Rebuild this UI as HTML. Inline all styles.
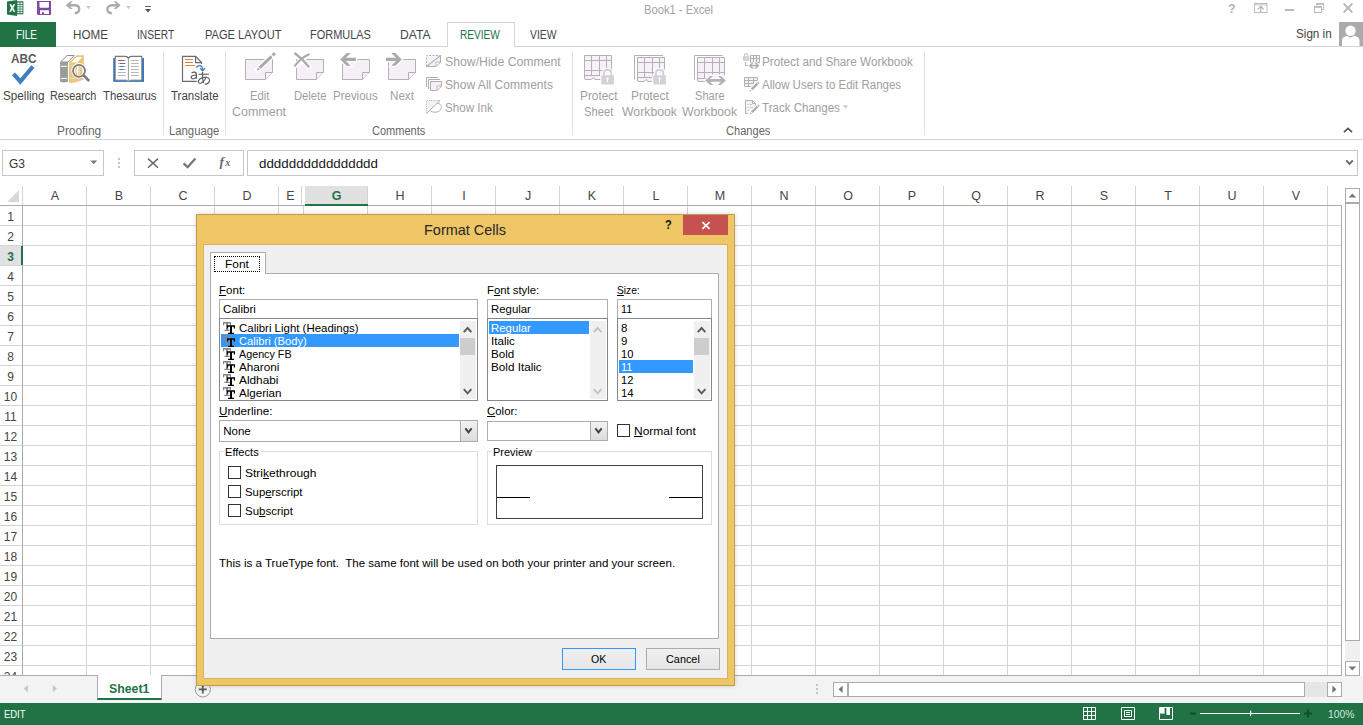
<!DOCTYPE html>
<html><head><meta charset="utf-8"><title>Book1 - Excel</title>
<style>
html,body{margin:0;padding:0;}
body{width:1363px;height:725px;overflow:hidden;background:#fff;position:relative;font-family:"Liberation Sans",sans-serif;}
.a{position:absolute;box-sizing:border-box;}
.t{position:absolute;white-space:pre;line-height:1;transform-origin:0 0;font-family:"Liberation Sans",sans-serif;}
.t u{text-decoration:underline;text-underline-offset:1px;}
svg{position:absolute;overflow:visible;}
.vl{position:absolute;width:1px;background:#d4d4d4;}
.hl{position:absolute;height:1px;background:#d4d4d4;}
.ch{position:absolute;top:186px;height:19px;line-height:21px;text-align:center;font-size:12.5px;color:#444;}
.rh{position:absolute;left:0;width:21px;height:19px;line-height:23px;text-align:center;font-size:12px;color:#444;}
.sep{position:absolute;top:51px;height:84px;width:1px;background:#e1e1e1;}
.inp{position:absolute;box-sizing:border-box;background:#fff;border:1px solid #abadb3;}
.lst{position:absolute;box-sizing:border-box;background:#fff;border:1px solid #828790;}
.cb{position:absolute;box-sizing:border-box;width:13px;height:13px;background:#fff;border:1px solid #333;}
.grp{position:absolute;box-sizing:border-box;border:1px solid #dcdcdc;}
.sel{position:absolute;background:#3399ff;height:13px;}
.trk{position:absolute;background:#f0f0f0;}
.btn{position:absolute;box-sizing:border-box;background:linear-gradient(#f0f0f0,#e5e5e5);border:1px solid #acacac;}
.sb{position:absolute;box-sizing:border-box;background:#fff;border:1px solid #ababab;}
</style></head>
<body>
<!-- ===== title / tabs ===== -->
<div class="a" style="left:0;top:22px;width:56px;height:25px;background:#217346;"></div>
<div class="hl" style="left:56px;top:46px;width:1307px;background:#d4d4d4;"></div>
<div class="a" style="left:447px;top:22px;width:68px;height:25px;background:#fff;border:1px solid #d4d4d4;border-bottom:none;"></div>
<!-- ribbon bottom -->
<div class="hl" style="left:0;top:139px;width:1363px;background:#d4d4d4;"></div>
<div class="sep" style="left:163px;"></div><div class="sep" style="left:225px;"></div><div class="sep" style="left:572px;"></div><div class="sep" style="left:924px;"></div>
<!-- excel logo -->
<svg style="left:7px;top:0" width="17" height="16" viewBox="0 0 17 16">
<rect x="9" y="1.3" width="7.4" height="13" rx="0.9" fill="#217346"/>
<g fill="#fff"><rect x="10.4" y="2.6" width="2.3" height="1.5"/><rect x="13.4" y="2.6" width="2.1" height="1.5"/><rect x="10.4" y="4.9" width="2.3" height="1.5"/><rect x="13.4" y="4.9" width="2.1" height="1.5"/><rect x="10.4" y="7.2" width="2.3" height="1.5"/><rect x="13.4" y="7.2" width="2.1" height="1.5"/><rect x="10.4" y="9.5" width="2.3" height="1.5"/><rect x="13.4" y="9.5" width="2.1" height="1.5"/><rect x="10.4" y="11.8" width="2.3" height="1.3"/><rect x="13.4" y="11.8" width="2.1" height="1.3"/></g>
<path d="M0 1.6L10 0V16L0 14.4Z" fill="#217346"/>
<path d="M2.4 4.2H4.3L5.3 6.5L6.4 4.2H8.2L6.3 7.9L8.3 11.8H6.4L5.2 9.3L4.1 11.8H2.2L4.2 7.9Z" fill="#fff"/>
</svg>
<!-- save -->
<svg style="left:37px;top:1px" width="14" height="14" viewBox="0 0 14 14">
<path d="M0 0H14V14H1L0 13Z" fill="#8249a3"/>
<path d="M2.5 1H12V6L11.3 6.7H3.2L2.5 6Z" fill="#fff"/>
<path d="M3 9.2H12V13H7V11.2H5V13H3Z" fill="#fff"/>
</svg>
<!-- undo -->
<svg style="left:65px;top:0" width="16" height="15" viewBox="0 0 16 15">
<path d="M2.2 5.2H9.6C12.8 5.2 14.2 7 14.2 9.2C14.2 11.6 12.6 13 9.8 13.2" fill="none" stroke="#ababab" stroke-width="2.4"/>
<path d="M0.8 5.2L5.4 1.2H7.6L4.2 5.2L7.6 9H5.2Z" fill="#ababab"/>
</svg>
<svg style="left:86px;top:6px" width="5" height="3" viewBox="0 0 5 3"><path d="M0 0H5L2.5 3Z" fill="#c8c8c8"/></svg>
<!-- redo -->
<svg style="left:106px;top:0" width="16" height="15" viewBox="0 0 16 15">
<path d="M13.2 5.2H6C3 5.2 1.4 7 1.4 9.2C1.4 11.6 3 13 5.8 13.2" fill="none" stroke="#ababab" stroke-width="2.4"/>
<path d="M14.6 5.2L10 1.2H7.8L11.2 5.2L7.8 9H10.2Z" fill="#ababab"/>
</svg>
<svg style="left:126px;top:6px" width="5" height="3" viewBox="0 0 5 3"><path d="M0 0H5L2.5 3Z" fill="#c8c8c8"/></svg>
<!-- customize QAT -->
<svg style="left:145px;top:6px" width="6" height="7" viewBox="0 0 6 7"><rect x="0" y="0" width="6" height="1" fill="#666"/><path d="M0 3H6L3 6.4Z" fill="#555"/></svg>
<!-- window controls -->
<span class="t" style="left:1227.5px;top:1.5px;font-size:13px;font-weight:bold;color:#b2b2b2;transform:scaleX(0.95);">?</span>
<svg style="left:1254px;top:3px" width="14" height="10" viewBox="0 0 14 10"><rect x="0.5" y="0.5" width="12.5" height="9" fill="none" stroke="#bdbdbd"/><rect x="0.5" y="0.5" width="12.5" height="2" fill="#bdbdbd" opacity=".6"/><path d="M6.8 9V3.6M3.8 6.4L6.8 3.4L9.8 6.4" fill="none" stroke="#b4b4b4" stroke-width="1.2"/></svg>
<div class="a" style="left:1285px;top:9px;width:9px;height:2px;background:#b9b9b9;"></div>
<svg style="left:1314px;top:3px" width="10" height="10" viewBox="0 0 10 10"><path d="M2.5 2.5V0.5H9.5V6.5H7.5" fill="none" stroke="#b9b9b9"/><path d="M2.5 0.5H9.5V1.8H2.5Z" fill="#b9b9b9"/><rect x="0.5" y="3.5" width="7" height="6" fill="#fff" stroke="#b9b9b9"/><rect x="0.5" y="3.5" width="7" height="1.3" fill="#b9b9b9"/></svg>
<svg style="left:1343px;top:3px" width="10" height="10" viewBox="0 0 10 10"><path d="M0.7 0.7L9.3 9.3M9.3 0.7L0.7 9.3" stroke="#b4b4b4" stroke-width="1.9"/></svg>
<!-- avatar -->
<div class="a" style="left:1339px;top:22px;width:24px;height:24px;background:#ababab;"></div>
<svg style="left:1339px;top:22px" width="24" height="24" viewBox="0 0 24 24"><circle cx="11.5" cy="8.8" r="5.2" fill="#fff"/><path d="M3 24V18.5C3 15.5 6 14 8 14L11.5 15.5L15 14C17.5 14 20.5 15.5 20.5 18.5V24Z" fill="#fff"/></svg>
<!-- ribbon collapse -->
<svg style="left:1343px;top:127px" width="10" height="6" viewBox="0 0 10 6"><path d="M1 5.2L5 1.4L9 5.2" fill="none" stroke="#555" stroke-width="1.8"/></svg>
<!-- ===== RIBBON ICONS (page coords via one big svg) ===== -->
<svg style="left:0;top:0" width="1363" height="140" viewBox="0 0 1363 140">
<!-- spelling check -->
<path d="M13.5 73.9L20.3 81.5L32.9 66.5" fill="none" stroke="#3f7ec0" stroke-width="4.2"/>
<!-- research -->
<g>
<path d="M60.5 62L67.1 55.5H74.3L67.9 62Z" fill="#fff" stroke="#8e8e8e" stroke-width="1"/>
<path d="M60.1 62H67.9V81.6C66 82.8 62 82.8 60.1 81.6Z" fill="#9b9b9b"/>
<rect x="61" y="65.8" width="6" height="1" fill="#fff"/><rect x="61" y="77.9" width="6" height="1" fill="#fff"/>
<path d="M69 62.2L76.4 55.2H83.9V79.5C80 81 77 82.4 73 82.8C71.5 83 70 82.8 69 82.4Z" fill="#e9c77f"/>
<path d="M71.2 62.4L76.3 56.9H82L77.5 62.4Z" fill="#fff"/>
<path d="M69.6 65.5C72 66.5 76 66 78 64.8" fill="none" stroke="#f6e7c4" stroke-width="0.8"/>
<path d="M69.6 77.8C72 79 76 78.6 79 77.4" fill="none" stroke="#f6e7c4" stroke-width="0.8"/>
<circle cx="79" cy="70.8" r="7.7" fill="#fff"/><path d="M83.6 75.4L90 81.8" stroke="#fff" stroke-width="5"/>
<circle cx="79" cy="70.8" r="6" fill="#fff" stroke="#7b7b7b" stroke-width="1.8"/>
<path d="M77 66.5C75.6 69 75.6 72.6 77 75M79 66V75.6" stroke="#e9c77f" stroke-width="1.3" fill="none"/>
<path d="M79.8 66.2C83 67 83.6 74 79.8 75.4Z" fill="#e9c77f"/>
<path d="M83.6 75.4L89.2 81" stroke="#7b7b7b" stroke-width="2.6"/>
</g>
<!-- thesaurus -->
<g>
<rect x="113.2" y="58" width="30.8" height="23.9" fill="#3e78b8"/>
<path d="M115.5 56.5H125C127 56.5 128 57.5 128.4 58.4C128.8 57.5 130 56.5 132 56.5H141.5V80H132C130 80 128.8 80.6 128.4 81.3C128 80.6 127 80 125 80H115.5Z" fill="#fff" stroke="#a39b95" stroke-width="0.9"/>
<path d="M115.2 57.8V56.3H125C127 56.3 128 57.3 128.4 58.2C128.8 57.3 130 56.3 132 56.3H141.8V57.8" fill="none" stroke="#6f6f6f" stroke-width="1.1"/>
<path d="M128.4 58.4V81.2" stroke="#9a9a9a" stroke-width="1"/>
<g stroke="#aeaeae" stroke-width="0.9">
<path d="M118 60.5H125.8M118 63.5H125.8M118 66.5H125.8M118 69.5H125.8M118 72.5H125.8M118 75.5H125.8"/>
<path d="M131 60.5H138.8M131 63.5H138.8M131 66.5H138.8M131 69.5H138.8M131 72.5H138.8M131 75.5H138.8"/>
</g>
<path d="M118 60.5H124" stroke="#d9482b" stroke-width="1"/>
<path d="M120 63.5H125M120 66.5H124M120 69.5H123" stroke="#3e78b8" stroke-width="1"/>
</g>
<!-- translate -->
<g fill="none">
<path d="M196.8 81.4H182.5V56.4H195.6L201.6 62.6V64" stroke="#6b6b6b" stroke-width="1.2"/>
<path d="M195.6 56.4V62.6H201.6" stroke="#6b6b6b" stroke-width="1.2"/>
<path d="M185 59.5H193M185 62.5H193M185 65.5H195" stroke="#e8842c" stroke-width="1.1"/>
<path d="M196.2 67.6C198 64.6 202.6 64.6 202.6 70" stroke="#3f7ec0" stroke-width="1.2"/>
<path d="M200.2 68.2L202.6 70.8L205 68.2" stroke="#3f7ec0" stroke-width="1.3"/>
<!-- a -->
<path d="M191.6 73.1C192.6 72 196.4 71.4 196.4 74.4V78.8M196.4 75C193 75 191.2 75.6 191.2 77.2C191.2 79.4 195 79.2 196.4 77.2" stroke="#5a5a5a" stroke-width="1.2"/>
<!-- あ -->
<path d="M198.6 74.2H208.8" stroke="#5a5a5a" stroke-width="1.1"/>
<path d="M202.6 72C202.2 76 202.6 80 203.6 83" stroke="#5a5a5a" stroke-width="1.1"/>
<path d="M206.4 76.4C205 81 201 84 199 83C197.4 82 198.4 78.8 202.6 77.6C207 76.4 209.8 78.4 209.6 80.6C209.4 82.6 207.6 83.8 204.8 84.4" stroke="#5a5a5a" stroke-width="1.1"/>
</g>
<!-- comment notes -->
<g fill="#f4f0f6" stroke="#b4b0b5" stroke-width="1">
<path id="note" d="M245.5 59.5H272.5V72.5L265.5 79.5H245.5Z"/>
<path d="M265.5 79.5V72.5H272.5" />
<path d="M296.5 59.5H323.5V72.5L316.5 79.5H296.5Z"/><path d="M316.5 79.5V72.5H323.5"/>
<path d="M342.5 59.5H369.5V72.5L362.5 79.5H342.5Z"/><path d="M362.5 79.5V72.5H369.5"/>
<path d="M388.5 59.5H415.5V72.5L408.5 79.5H388.5Z"/><path d="M408.5 79.5V72.5H415.5"/>
</g>
<!-- pencil on edit -->
<path d="M256 71.4L275.4 52.6" stroke="#fff" stroke-width="5.4"/>
<path d="M259.6 67.9L271.6 56.3" stroke="#ababab" stroke-width="3.1"/>
<path d="M272.6 55.3L274.9 53.1" stroke="#ababab" stroke-width="3.1"/>
<path d="M256.8 70.6L257.9 67.4L260 69.6Z" fill="#ababab"/>
<!-- X on delete -->
<path d="M293 52.5L310.5 68M310 53L293 67.5" stroke="#fff" stroke-width="5"/>
<path d="M295.2 53.6C300 57 305 62 308.6 66.4" stroke="#ababab" stroke-width="2.4" fill="none" stroke-linecap="round"/>
<path d="M308.6 54.4C303 57 298 61.6 295 65.6" stroke="#ababab" stroke-width="2.2" fill="none" stroke-linecap="round"/>
<!-- previous arrow -->
<path d="M340.2 59.4L346.6 53H350.8L346 57.8H356V61H346L350.8 65.8H346.6Z" fill="#ababab" stroke="#fff" stroke-width="2.6" paint-order="stroke"/>
<!-- next arrow -->
<path d="M401.8 59.4L395.4 53H391.2L396 57.8H386V61H396L391.2 65.8H395.4Z" fill="#ababab" stroke="#fff" stroke-width="2.6" paint-order="stroke"/>
<!-- show/hide comment -->
<g stroke="#b0acb1" fill="none" stroke-width="1">
<path d="M426.5 66.5V55.5H440.5Z" fill="#f7f4f8" stroke="none"/><path d="M426.5 66.5H436L440.5 62V55.5L426.5 66.5Z" fill="#f4f0f6"/>
<path d="M436 66.5V62H440.5L436 66.5" fill="#fff" stroke-width="0.8"/>
<path d="M426.5 66.5V55.5H440.5" stroke-dasharray="2 1.4"/>
<path d="M426.5 66.5L440.5 55.5"/>
<!-- show all -->
<path d="M426.5 87V77.5H438"/><path d="M428.5 89V79.5H440"/>
<path d="M430.5 81.5H441.5V86L437 90.5H430.5Z" fill="#f4f0f6"/><path d="M437 90.5V86H441.5L437 90.5" fill="#fff" stroke-width="0.8"/>
<!-- show ink -->
<path d="M426.5 113.5L440 100.5V100.5H426.5Z" fill="#f4f0f6" stroke="none"/>
<path d="M426.5 113.5V100.5H440" stroke-dasharray="1 1.2"/>
<path d="M426.5 113.5L440 100.5"/>
<path d="M437.5 103C442 104 442.6 108.6 439.6 110.8C437 112.8 433 112.6 430.6 111"/>
</g>
<!-- protect sheet -->
<path d="M584.5 55.5H611.5V79.5H584.5Z" fill="#f6f1f8"/>
<g stroke="#b4b0b5" stroke-width="1" fill="none">
<path d="M611.5 69.5V55.5H584.5V78Q584.5 79.5 586 79.5H591.4L593.4 77.4L594.8 79.5H600.5"/>
<path d="M591.5 55.5V75.5M599.5 55.5V75.5M606.5 55.5V68.5M584.5 60.5H611.5M584.5 70.5H602.5M584.5 75.5H600.5"/>
</g>
<g><path d="M603.9 76V73.2C603.9 68.6 611.3 68.6 611.3 73.2V76" fill="none" stroke="#fff" stroke-width="4"/><rect x="600.3" y="74.3" width="14.6" height="11.3" fill="#fff"/>
<path d="M603.9 76V73.2C603.9 68.6 611.3 68.6 611.3 73.2V76" fill="none" stroke="#d5d1d6" stroke-width="1.9"/><rect x="601.3" y="75.3" width="12.6" height="9.3" rx="0.8" fill="#d5d1d6"/><circle cx="607.6" cy="78.4" r="1.1" fill="#fff"/><rect x="607.1" y="78.4" width="1" height="4" fill="#fff"/></g>
<!-- protect workbook -->
<path d="M637.5 57.5H664.5V81.5H637.5Z" fill="#f6f1f8"/>
<g stroke="#b4b0b5" stroke-width="1" fill="none">
<path d="M634.5 79.5V55.5H663"/>
<path d="M664.5 69.5V57.5H637.5V80Q637.5 81.5 639 81.5H644.4L646.4 79.4L647.8 81.5H652.5"/>
<path d="M644.5 57.5V77.5M652.5 57.5V77.5M659.5 57.5V68.5M637.5 62.5H664.5M637.5 72.5H654.5M637.5 77.5H652.5"/>
</g>
<g><path d="M655.9 76V73.2C655.9 68.6 663.3 68.6 663.3 73.2V76" fill="none" stroke="#fff" stroke-width="4"/><rect x="652.3" y="74.3" width="14.6" height="11.3" fill="#fff"/>
<path d="M655.9 76V73.2C655.9 68.6 663.3 68.6 663.3 73.2V76" fill="none" stroke="#d5d1d6" stroke-width="1.9"/><rect x="653.3" y="75.3" width="12.6" height="9.3" rx="0.8" fill="#d5d1d6"/><circle cx="659.6" cy="78.4" r="1.1" fill="#fff"/><rect x="659.1" y="78.4" width="1" height="4" fill="#fff"/></g>
<!-- share workbook -->
<path d="M697.5 57.5H724.5V81.5H697.5Z" fill="#f6f1f8"/>
<g stroke="#b4b0b5" stroke-width="1" fill="none">
<path d="M694.5 79.5V55.5H722.5"/>
<path d="M724.5 75V57.5H697.5V80Q697.5 81.5 699 81.5H705"/>
<path d="M704.5 57.5V78M712.5 57.5V74.5M719.5 57.5V74.5M697.5 62.5H724.5M697.5 72.5H724.5M697.5 78.5H706"/>
</g>
<path d="M705 80.4L710.2 75.9H713.4L709.8 79H721.2L717.6 75.9H720.8L726 80.4L720.8 84.9H717.6L721.2 81.8H709.8L713.4 84.9H710.2Z" fill="#b5b1b6" stroke="#fff" stroke-width="2" paint-order="stroke"/>
<!-- protect & share small -->
<g stroke="#b4b0b5" stroke-width="1" fill="none">
<path d="M750.5 55.5H759.5V62.5H750.5Z" fill="#f6f1f8"/><path d="M750.5 58.5H759.5M753.5 55.5V62.5M756.5 55.5V62.5"/>
<path d="M745.5 62V65.5H748"/>
</g>
<path d="M744.4 56.6V55.8C744.4 52.8 747.8 52.8 747.8 55.8V56.6" fill="none" stroke="#d0ccd1" stroke-width="1.2"/><rect x="743" y="56.2" width="6.2" height="4.6" fill="#d0ccd1"/><rect x="745.8" y="57.4" width="0.8" height="2.2" fill="#fff"/>
<path d="M748.7 65.7L752 62.6H754L751.8 64.8H756.4L754.2 62.6H756.2L759.4 65.7L756.2 68.8H754.2L756.4 66.6H751.8L754 68.8H752Z" fill="#b5b1b6" stroke="#fff" stroke-width="1.4" paint-order="stroke"/>
<!-- allow users small -->
<path d="M744.5 77.5H757.5V86.5H744.5Z" fill="#f6f1f8"/>
<g stroke="#b4b0b5" stroke-width="1" fill="none">
<path d="M757.5 81.5V77.5H744.5V86.5H751.5"/>
<path d="M744.5 80.5H757.5M744.5 83.5H754M748.5 77.5V86.5M753.5 77.5V84.5"/>
</g>
<path d="M749 92L759.4 81.8" stroke="#fff" stroke-width="4.6"/>
<path d="M751.6 89.3L757.4 83.7" stroke="#ababab" stroke-width="2.3"/><path d="M757.9 83.2L758.8 82.3" stroke="#ababab" stroke-width="2.3"/><path d="M749.3 91.6L750 89.4L751.5 90.9Z" fill="#ababab"/>
<!-- track changes small -->
<path d="M745.5 100.5H752.5L755.5 103.5V113.5H745.5Z" fill="#f6f1f8"/>
<g stroke="#b4b0b5" stroke-width="1" fill="none">
<path d="M755.5 105.5V103.5L752.5 100.5H745.5V113.5H749.5"/>
<path d="M752.5 100.5V103.5H755.5"/>
<path d="M747.5 104.5H749M750 104.5H752M747.5 107.5H749M750 107.5H753M747.5 110.5H749" stroke="#c9c5ca"/>
</g>
<path d="M749.2 114.9L759.6 104.7" stroke="#fff" stroke-width="4.6"/>
<path d="M751.8 112.2L757.6 106.6" stroke="#ababab" stroke-width="2.3"/><path d="M758.1 106.1L759 105.2" stroke="#ababab" stroke-width="2.3"/><path d="M749.5 114.5L750.2 112.3L751.7 113.8Z" fill="#ababab"/>
<!-- track changes dropdown arrow -->
<path d="M843 105.5H848L845.5 108.3Z" fill="#c0c0c0"/>
</svg>

<!-- ===== formula bar ===== -->
<div class="a" style="left:2px;top:150px;width:102px;height:26px;border:1px solid #c6c6c6;"></div>
<div class="a" style="left:134px;top:150px;width:110px;height:26px;border:1px solid #c6c6c6;"></div>
<div class="a" style="left:247px;top:150px;width:1111px;height:26px;border:1px solid #c6c6c6;"></div>
<!-- ===== grid ===== -->
<div class="a" style="left:305px;top:186px;width:63px;height:18px;background:#e1e1e1;"></div>
<div class="a" style="left:0;top:246px;width:21px;height:19px;background:#e1e1e1;"></div>
<div class="vl" style="left:86px;top:186px;height:19px;"></div>
<div class="vl" style="left:150px;top:186px;height:19px;"></div>
<div class="vl" style="left:214px;top:186px;height:19px;"></div>
<div class="vl" style="left:278px;top:186px;height:19px;"></div>
<div class="vl" style="left:301px;top:186px;height:19px;"></div>
<div class="vl" style="left:367px;top:186px;height:19px;"></div>
<div class="vl" style="left:431px;top:186px;height:19px;"></div>
<div class="vl" style="left:495px;top:186px;height:19px;"></div>
<div class="vl" style="left:559px;top:186px;height:19px;"></div>
<div class="vl" style="left:623px;top:186px;height:19px;"></div>
<div class="vl" style="left:687px;top:186px;height:19px;"></div>
<div class="vl" style="left:751px;top:186px;height:19px;"></div>
<div class="vl" style="left:815px;top:186px;height:19px;"></div>
<div class="vl" style="left:879px;top:186px;height:19px;"></div>
<div class="vl" style="left:943px;top:186px;height:19px;"></div>
<div class="vl" style="left:1007px;top:186px;height:19px;"></div>
<div class="vl" style="left:1071px;top:186px;height:19px;"></div>
<div class="vl" style="left:1135px;top:186px;height:19px;"></div>
<div class="vl" style="left:1199px;top:186px;height:19px;"></div>
<div class="vl" style="left:1263px;top:186px;height:19px;"></div>
<div class="vl" style="left:1327px;top:186px;height:19px;"></div>
<div class="vl" style="left:86px;top:206px;height:469px;"></div>
<div class="vl" style="left:150px;top:206px;height:469px;"></div>
<div class="vl" style="left:214px;top:206px;height:469px;"></div>
<div class="vl" style="left:278px;top:206px;height:469px;"></div>
<div class="vl" style="left:303px;top:206px;height:469px;"></div>
<div class="vl" style="left:367px;top:206px;height:469px;"></div>
<div class="vl" style="left:431px;top:206px;height:469px;"></div>
<div class="vl" style="left:495px;top:206px;height:469px;"></div>
<div class="vl" style="left:559px;top:206px;height:469px;"></div>
<div class="vl" style="left:623px;top:206px;height:469px;"></div>
<div class="vl" style="left:687px;top:206px;height:469px;"></div>
<div class="vl" style="left:751px;top:206px;height:469px;"></div>
<div class="vl" style="left:815px;top:206px;height:469px;"></div>
<div class="vl" style="left:879px;top:206px;height:469px;"></div>
<div class="vl" style="left:943px;top:206px;height:469px;"></div>
<div class="vl" style="left:1007px;top:206px;height:469px;"></div>
<div class="vl" style="left:1071px;top:206px;height:469px;"></div>
<div class="vl" style="left:1135px;top:206px;height:469px;"></div>
<div class="vl" style="left:1199px;top:206px;height:469px;"></div>
<div class="vl" style="left:1263px;top:206px;height:469px;"></div>
<div class="vl" style="left:1327px;top:206px;height:469px;"></div>
<div class="hl" style="left:0;top:225px;width:1341px;"></div>
<div class="hl" style="left:0;top:245px;width:1341px;"></div>
<div class="hl" style="left:0;top:265px;width:1341px;"></div>
<div class="hl" style="left:0;top:285px;width:1341px;"></div>
<div class="hl" style="left:0;top:305px;width:1341px;"></div>
<div class="hl" style="left:0;top:325px;width:1341px;"></div>
<div class="hl" style="left:0;top:345px;width:1341px;"></div>
<div class="hl" style="left:0;top:365px;width:1341px;"></div>
<div class="hl" style="left:0;top:385px;width:1341px;"></div>
<div class="hl" style="left:0;top:405px;width:1341px;"></div>
<div class="hl" style="left:0;top:425px;width:1341px;"></div>
<div class="hl" style="left:0;top:445px;width:1341px;"></div>
<div class="hl" style="left:0;top:465px;width:1341px;"></div>
<div class="hl" style="left:0;top:485px;width:1341px;"></div>
<div class="hl" style="left:0;top:505px;width:1341px;"></div>
<div class="hl" style="left:0;top:525px;width:1341px;"></div>
<div class="hl" style="left:0;top:545px;width:1341px;"></div>
<div class="hl" style="left:0;top:565px;width:1341px;"></div>
<div class="hl" style="left:0;top:585px;width:1341px;"></div>
<div class="hl" style="left:0;top:605px;width:1341px;"></div>
<div class="hl" style="left:0;top:625px;width:1341px;"></div>
<div class="hl" style="left:0;top:645px;width:1341px;"></div>
<div class="hl" style="left:0;top:665px;width:1341px;"></div>
<div class="hl" style="left:0;top:205px;width:1342px;background:#ababab;"></div>
<div class="vl" style="left:22px;top:206px;height:469px;background:#ababab;"></div>
<div class="vl" style="left:22px;top:186px;height:19px;"></div>
<div class="vl" style="left:1341px;top:205px;height:471px;background:#ababab;"></div>
<div class="a" style="left:305px;top:204px;width:63px;height:2px;background:#217346;"></div>
<div class="a" style="left:21px;top:246px;width:2px;height:19px;background:#217346;"></div>
<svg style="left:7px;top:190px" width="12" height="12"><path d="M12 0V12H0Z" fill="#d9d9d9"/></svg>
<div class="ch" style="left:23px;width:64px;">A</div>
<div class="ch" style="left:87px;width:64px;">B</div>
<div class="ch" style="left:151px;width:64px;">C</div>
<div class="ch" style="left:215px;width:64px;">D</div>
<div class="ch" style="left:279px;width:23px;">E</div>
<div class="ch" style="left:305px;width:63px;font-weight:bold;color:#217346;">G</div>
<div class="ch" style="left:368px;width:64px;">H</div>
<div class="ch" style="left:432px;width:64px;">I</div>
<div class="ch" style="left:496px;width:64px;">J</div>
<div class="ch" style="left:560px;width:64px;">K</div>
<div class="ch" style="left:624px;width:64px;">L</div>
<div class="ch" style="left:688px;width:64px;">M</div>
<div class="ch" style="left:752px;width:64px;">N</div>
<div class="ch" style="left:816px;width:64px;">O</div>
<div class="ch" style="left:880px;width:64px;">P</div>
<div class="ch" style="left:944px;width:64px;">Q</div>
<div class="ch" style="left:1008px;width:64px;">R</div>
<div class="ch" style="left:1072px;width:64px;">S</div>
<div class="ch" style="left:1136px;width:64px;">T</div>
<div class="ch" style="left:1200px;width:64px;">U</div>
<div class="ch" style="left:1264px;width:64px;">V</div>
<div class="rh" style="top:206px;">1</div>
<div class="rh" style="top:226px;">2</div>
<div class="rh" style="top:246px;font-weight:bold;color:#217346;">3</div>
<div class="rh" style="top:266px;">4</div>
<div class="rh" style="top:286px;">5</div>
<div class="rh" style="top:306px;">6</div>
<div class="rh" style="top:326px;">7</div>
<div class="rh" style="top:346px;">8</div>
<div class="rh" style="top:366px;">9</div>
<div class="rh" style="top:386px;">10</div>
<div class="rh" style="top:406px;">11</div>
<div class="rh" style="top:426px;">12</div>
<div class="rh" style="top:446px;">13</div>
<div class="rh" style="top:466px;">14</div>
<div class="rh" style="top:486px;">15</div>
<div class="rh" style="top:506px;">16</div>
<div class="rh" style="top:526px;">17</div>
<div class="rh" style="top:546px;">18</div>
<div class="rh" style="top:566px;">19</div>
<div class="rh" style="top:586px;">20</div>
<div class="rh" style="top:606px;">21</div>
<div class="rh" style="top:626px;">22</div>
<div class="rh" style="top:646px;">23</div>
<div class="rh" style="top:666px;height:9px;overflow:hidden;">24</div>
<!-- ===== sheet tab strip ===== -->
<div class="a" style="left:0;top:676px;width:1363px;height:27px;background:#f3f3f3;"></div>
<div class="hl" style="left:0;top:675px;width:1342px;background:#ababab;"></div>
<div class="a" style="left:97px;top:675px;width:65px;height:25px;background:#fff;border-left:1px solid #ababab;border-right:1px solid #ababab;border-bottom:2px solid #217346;"></div>
<!-- h scrollbar -->
<div class="a" style="left:1305px;top:682px;width:22px;height:15px;background:#e6e6e6;"></div>
<div class="sb" style="left:833px;top:682px;width:15px;height:15px;"></div>
<div class="sb" style="left:848px;top:682px;width:457px;height:15px;"></div>
<div class="sb" style="left:1327px;top:682px;width:15px;height:15px;"></div>
<!-- v scrollbar -->
<div class="a" style="left:1345px;top:641px;width:15px;height:20px;background:#f0f0f0;"></div>
<div class="sb" style="left:1345px;top:188px;width:15px;height:15px;"></div>
<div class="sb" style="left:1345px;top:203px;width:15px;height:438px;"></div>
<div class="sb" style="left:1345px;top:661px;width:15px;height:15px;"></div>
<!-- ===== status bar ===== -->
<div class="a" style="left:0;top:703px;width:1363px;height:22px;background:#217346;"></div>
<svg style="left:0;top:140px" width="1363" height="585" viewBox="0 140 1363 585">
<!-- name box arrow -->
<path d="M90.2 160.4H97.2L93.7 164.2Z" fill="#777"/>
<!-- dots -->
<g fill="#c3c3c3"><rect x="118" y="158" width="2" height="2"/><rect x="118" y="162" width="2" height="2"/><rect x="118" y="166" width="2" height="2"/></g>
<!-- cancel X -->
<path d="M148 158.6L158 167.8M158 158.6L148 167.8" stroke="#6a6a6a" stroke-width="1.5"/>
<!-- enter check -->
<path d="M183.6 163.4L187.6 167.2L195.4 158.6" fill="none" stroke="#787878" stroke-width="2.3"/>
<!-- formula expand chevron -->
<path d="M1346.2 160.4L1349.5 163.8L1352.8 160.4" fill="none" stroke="#666" stroke-width="1.9"/>
<!-- vscroll arrows -->
<path d="M1348.6 197.6H1356L1352.3 193.6Z" fill="#777"/>
<path d="M1348.6 666.4H1356L1352.3 670.4Z" fill="#777"/>
<!-- hscroll arrows -->
<path d="M842.6 685.4V693L838.6 689.2Z" fill="#777"/>
<path d="M1332.4 685.4V693L1336.4 689.2Z" fill="#777"/>
<!-- hscroll dots -->
<g fill="#c3c3c3"><rect x="816" y="684" width="2" height="2"/><rect x="816" y="688" width="2" height="2"/><rect x="816" y="692" width="2" height="2"/></g>
<!-- sheet nav arrows -->
<path d="M27.8 685V692.2L23.8 688.6Z" fill="#c6c6c6"/>
<path d="M52.8 685V692.2L56.8 688.6Z" fill="#c6c6c6"/>
<!-- new sheet plus -->
<circle cx="202.8" cy="689.4" r="7.6" fill="#f3f3f3" stroke="#9a9a9a" stroke-width="1"/>
<path d="M198.8 689.4H206.8M202.8 685.4V693.4" stroke="#5a5a5a" stroke-width="1.8"/>
<!-- status bar view icons -->
<g fill="none" stroke="#fff" stroke-width="1">
<path d="M1083.5 707.5H1095.5V719.5H1083.5ZM1083.5 711.5H1095.5M1083.5 715.5H1095.5M1087.5 707.5V719.5M1091.5 707.5V719.5"/>
<path d="M1121.5 707.5H1134.5V719.5H1121.5Z"/><path d="M1124.5 710.5H1131.5V716.5H1124.5ZM1126 712.5H1130M1126 714.5H1130"/>
<path d="M1159.5 707.5H1172.5V719.5H1159.5Z"/>
</g>
<path d="M1160 708H1166V713.6H1160Z M1168 708H1172V716H1168Z" fill="#fff" fill-opacity=".0"/>
<path d="M1160 708H1164.6V713.6H1160Z" fill="#fff"/><path d="M1166.4 708H1170V715H1166.4Z" fill="#fff"/>
<!-- zoom -->
<rect x="1190" y="712.4" width="6" height="2.2" fill="#0c5128"/>
<rect x="1200" y="713" width="100" height="1" fill="#fff"/>
<rect x="1250" y="710.6" width="1.2" height="5.6" fill="#fff"/>
<path d="M1304 713.5H1312M1308 709.5V717.5" stroke="#0c5128" stroke-width="2.2"/>
</svg>
<span class="t" style="left:219.6px;top:155.4px;font-size:13.5px;font-family:'Liberation Serif',serif;font-style:italic;font-weight:bold;color:#6a6a6a;">f</span>
<span class="t" style="left:225.2px;top:158.4px;font-size:10px;font-family:'Liberation Serif',serif;font-style:italic;font-weight:bold;color:#6a6a6a;">x</span>

<!-- ===== dialog ===== -->
<div class="a" style="left:196px;top:214px;width:539px;height:472px;background:#efc666;border:1px solid #c09d4b;box-shadow:0 0 5px rgba(0,0,0,0.16);"></div>
<div class="a" style="left:203px;top:244px;width:525px;height:435px;background:#f0f0f0;border:1px solid #dcb257;"></div>
<div class="a" style="left:683px;top:215px;width:45px;height:20px;background:#c75050;"></div>
<!-- tab control -->
<div class="a" style="left:210px;top:273px;width:509px;height:366px;background:#fff;border:1px solid #acacac;"></div>
<div class="a" style="left:210px;top:252px;width:56px;height:22px;background:#fff;border:1px solid #acacac;border-bottom:none;"></div>
<div class="a" style="left:214px;top:256px;width:46px;height:16px;border:1px dotted #000;"></div>
<!-- inputs -->
<div class="inp" style="left:219px;top:299px;width:259px;height:20px;"></div>
<div class="inp" style="left:487px;top:299px;width:121px;height:20px;"></div>
<div class="inp" style="left:617px;top:299px;width:95px;height:20px;"></div>
<div class="lst" style="left:219px;top:318px;width:259px;height:83px;"></div>
<div class="lst" style="left:487px;top:318px;width:121px;height:83px;"></div>
<div class="lst" style="left:617px;top:318px;width:95px;height:83px;"></div>
<!-- selections -->
<div class="sel" style="left:221px;top:334px;width:238px;"></div>
<div class="sel" style="left:489px;top:321px;width:100px;"></div>
<div class="sel" style="left:619px;top:360px;width:74px;"></div>
<!-- list scrollbars -->
<div class="trk" style="left:460px;top:321px;width:16px;height:78px;"></div>
<div class="trk" style="left:590px;top:321px;width:16px;height:78px;"></div>
<div class="trk" style="left:694px;top:321px;width:16px;height:78px;"></div>
<div class="a" style="left:460px;top:338px;width:15px;height:17px;background:#cdcdcd;"></div>
<div class="a" style="left:694px;top:338px;width:15px;height:17px;background:#cdcdcd;"></div>
<!-- combos -->
<div class="inp" style="left:219px;top:420px;width:259px;height:22px;border-color:#acacac;"></div>
<div class="btn" style="left:460px;top:420px;width:18px;height:22px;background:linear-gradient(#f2f2f2,#dcdcdc);"></div>
<div class="inp" style="left:487px;top:421px;width:121px;height:20px;border-color:#acacac;"></div>
<div class="btn" style="left:590px;top:421px;width:18px;height:20px;background:linear-gradient(#f2f2f2,#dcdcdc);"></div>
<!-- groups -->
<div class="grp" style="left:219px;top:451px;width:259px;height:74px;"></div>
<div class="grp" style="left:487px;top:451px;width:225px;height:74px;"></div>
<div class="a" style="left:223px;top:446px;width:38px;height:12px;background:#fff;"></div>
<div class="a" style="left:491px;top:446px;width:44px;height:12px;background:#fff;"></div>
<div class="cb" style="left:228px;top:466px;"></div><div class="cb" style="left:228px;top:485px;"></div><div class="cb" style="left:228px;top:504px;"></div>
<div class="cb" style="left:617px;top:424px;"></div>
<!-- preview -->
<div class="a" style="left:496px;top:465px;width:207px;height:54px;background:#fff;border:1px solid #404040;"></div>
<div class="hl" style="left:497px;top:497px;width:33px;background:#000;"></div>
<div class="hl" style="left:669px;top:497px;width:33px;background:#000;"></div>
<!-- buttons -->
<div class="btn" style="left:562px;top:648px;width:74px;height:22px;border-color:#3399ff;"></div>
<div class="btn" style="left:646px;top:648px;width:74px;height:22px;"></div>
<svg style="left:0;top:0" width="1363" height="725" viewBox="0 0 1363 725">
<defs>
<g id="tt">
<path d="M223 322H231V325.2H229.8V323.6H228V329.8H229.6V331H224.4V329.8H226V323.6H224.2V325.2H223Z" fill="#858585"/>
<path d="M227 325.2H235V328.6H233.8V326.8H232V332.8H234V334H228V332.8H230V326.8H228.2V328.6H227Z" fill="#000"/>
</g>
<path id="chu" d="M0 5.6L3.8 1.4L7.6 5.6" fill="none" stroke-width="1.9"/>
<path id="chd" d="M0 1.2L3.8 5.4L7.6 1.2" fill="none" stroke-width="1.9"/>
</defs>
<use href="#tt"/><use href="#tt" y="13"/><use href="#tt" y="26"/><use href="#tt" y="39"/><use href="#tt" y="52"/><use href="#tt" y="65"/>
<!-- scroll chevrons -->
<use href="#chu" x="463.8" y="326.6" stroke="#5c5c5c"/><use href="#chd" x="463.8" y="388" stroke="#5c5c5c"/>
<use href="#chu" x="593.8" y="326.6" stroke="#c3c3c3"/><use href="#chd" x="593.8" y="388" stroke="#c3c3c3"/>
<use href="#chu" x="697.8" y="326.6" stroke="#5c5c5c"/><use href="#chd" x="697.8" y="388" stroke="#5c5c5c"/>
<!-- combo chevrons -->
<path d="M465.4 428.4L468.5 432.4L471.6 428.4" fill="none" stroke="#444" stroke-width="2"/>
<path d="M595.4 428.4L598.5 432.4L601.6 428.4" fill="none" stroke="#444" stroke-width="2"/>
<!-- close X -->
<path d="M702.4 222.2L709.6 228.8M709.6 222.2L702.4 228.8" stroke="#fff" stroke-width="1.7"/>
</svg>
<span class="t" style="left:665.4px;top:218.6px;font-size:12.5px;font-weight:bold;color:#111;transform:scaleX(0.88);">?</span>

<span class="t" style="left:644.4px;top:4.00px;font-size:12.5px;color:#a3a3a3;transform:scaleX(0.895);">Book1 - Excel</span>
<span class="t" style="left:16.2px;top:29.00px;font-size:12.5px;color:#fff;transform:scaleX(0.791);">FILE</span>
<span class="t" style="left:73.2px;top:29.00px;font-size:12.5px;color:#444;transform:scaleX(0.931);">HOME</span>
<span class="t" style="left:137.4px;top:29.00px;font-size:12.5px;color:#444;transform:scaleX(0.815);">INSERT</span>
<span class="t" style="left:204.7px;top:29.00px;font-size:12.5px;color:#444;transform:scaleX(0.885);">PAGE LAYOUT</span>
<span class="t" style="left:310.2px;top:29.00px;font-size:12.5px;color:#444;transform:scaleX(0.877);">FORMULAS</span>
<span class="t" style="left:400.2px;top:29.00px;font-size:12.5px;color:#444;transform:scaleX(0.972);">DATA</span>
<span class="t" style="left:529.7px;top:29.00px;font-size:12.5px;color:#444;transform:scaleX(0.826);">VIEW</span>
<span class="t" style="left:460.4px;top:29.00px;font-size:12.5px;color:#217346;transform:scaleX(0.805);">REVIEW</span>
<span class="t" style="left:1296.0px;top:27.00px;font-size:13px;color:#444;transform:scaleX(0.898);">Sign in</span>
<span class="t" style="left:11.1px;top:53.00px;font-size:12px;color:#5a5a5a;font-weight:bold;transform:scaleX(0.981);">ABC</span>
<span class="t" style="left:2.9px;top:90.00px;font-size:12.5px;color:#444;transform:scaleX(0.935);">Spelling</span>
<span class="t" style="left:50.2px;top:90.00px;font-size:12.5px;color:#444;transform:scaleX(0.865);">Research</span>
<span class="t" style="left:102.5px;top:90.00px;font-size:12.5px;color:#444;transform:scaleX(0.904);">Thesaurus</span>
<span class="t" style="left:170.5px;top:90.00px;font-size:12.5px;color:#444;transform:scaleX(0.921);">Translate</span>
<span class="t" style="left:249.5px;top:90.00px;font-size:12.5px;color:#a0a0a0;transform:scaleX(0.905);">Edit</span>
<span class="t" style="left:232.0px;top:106.00px;font-size:12.5px;color:#a0a0a0;transform:scaleX(0.998);">Comment</span>
<span class="t" style="left:293.6px;top:90.00px;font-size:12.5px;color:#a0a0a0;transform:scaleX(0.899);">Delete</span>
<span class="t" style="left:333.4px;top:90.00px;font-size:12.5px;color:#a0a0a0;transform:scaleX(0.919);">Previous</span>
<span class="t" style="left:390.4px;top:90.00px;font-size:12.5px;color:#a0a0a0;transform:scaleX(0.930);">Next</span>
<span class="t" style="left:579.6px;top:90.00px;font-size:12.5px;color:#a0a0a0;transform:scaleX(0.947);">Protect</span>
<span class="t" style="left:583.7px;top:106.00px;font-size:12.5px;color:#a0a0a0;transform:scaleX(0.900);">Sheet</span>
<span class="t" style="left:631.3px;top:90.00px;font-size:12.5px;color:#a0a0a0;transform:scaleX(0.954);">Protect</span>
<span class="t" style="left:621.7px;top:106.00px;font-size:12.5px;color:#a0a0a0;transform:scaleX(0.981);">Workbook</span>
<span class="t" style="left:694.7px;top:90.00px;font-size:12.5px;color:#a0a0a0;transform:scaleX(0.887);">Share</span>
<span class="t" style="left:682.0px;top:106.00px;font-size:12.5px;color:#a0a0a0;transform:scaleX(0.983);">Workbook</span>
<span class="t" style="left:445.1px;top:56.00px;font-size:12.5px;color:#a0a0a0;transform:scaleX(0.980);">Show/Hide Comment</span>
<span class="t" style="left:445.1px;top:79.00px;font-size:12.5px;color:#a0a0a0;transform:scaleX(0.965);">Show All Comments</span>
<span class="t" style="left:445.1px;top:102.00px;font-size:12.5px;color:#a0a0a0;transform:scaleX(0.928);">Show Ink</span>
<span class="t" style="left:762.2px;top:56.00px;font-size:12.5px;color:#a0a0a0;transform:scaleX(0.941);">Protect and Share Workbook</span>
<span class="t" style="left:762.0px;top:79.00px;font-size:12.5px;color:#a0a0a0;transform:scaleX(0.918);">Allow Users to Edit Ranges</span>
<span class="t" style="left:762.2px;top:102.00px;font-size:12.5px;color:#a0a0a0;transform:scaleX(0.924);">Track Changes</span>
<span class="t" style="left:57.4px;top:125.00px;font-size:12.5px;color:#666;transform:scaleX(0.949);">Proofing</span>
<span class="t" style="left:169.2px;top:125.00px;font-size:12.5px;color:#666;transform:scaleX(0.904);">Language</span>
<span class="t" style="left:372.4px;top:125.00px;font-size:12.5px;color:#666;transform:scaleX(0.882);">Comments</span>
<span class="t" style="left:726.2px;top:125.00px;font-size:12.5px;color:#666;transform:scaleX(0.887);">Changes</span>
<span class="t" style="left:8.9px;top:157.00px;font-size:13px;color:#333;transform:scaleX(0.923);">G3</span>
<span class="t" style="left:259.4px;top:157.00px;font-size:13.7px;color:#1a1a1a;transform:scaleX(0.977);">dddddddddddddddd</span>
<span class="t" style="left:109.0px;top:682.00px;font-size:13px;color:#217346;font-weight:bold;transform:scaleX(0.947);">Sheet1</span>
<span class="t" style="left:4.4px;top:709.00px;font-size:11px;color:#fff;transform:scaleX(0.858);">EDIT</span>
<span class="t" style="left:1327.6px;top:709.00px;font-size:11px;color:#d5e6db;transform:scaleX(0.938);">100%</span>
<span class="t" style="left:424.1px;top:222.00px;font-size:15px;color:#262626;transform:scaleX(0.965);">Format Cells</span>
<span class="t" style="left:225.1px;top:259.00px;font-size:11.5px;color:#000;transform:scaleX(1.034);">Font</span>
<span class="t" style="left:219.0px;top:285.00px;font-size:11.5px;color:#000;transform:scaleX(1.003);"><u>F</u>ont:</span>
<span class="t" style="left:487.1px;top:285.00px;font-size:11.5px;color:#000;transform:scaleX(0.984);">F<u>o</u>nt style:</span>
<span class="t" style="left:616.7px;top:285.00px;font-size:11.5px;color:#000;transform:scaleX(0.887);"><u>S</u>ize:</span>
<span class="t" style="left:223.2px;top:304.00px;font-size:11.5px;color:#000;transform:scaleX(1.009);">Calibri</span>
<span class="t" style="left:491.2px;top:304.00px;font-size:11.5px;color:#000;transform:scaleX(0.991);">Regular</span>
<span class="t" style="left:620.9px;top:304.00px;font-size:11.5px;color:#000;transform:scaleX(0.937);">11</span>
<span class="t" style="left:239.1px;top:323.00px;font-size:11.5px;color:#000;transform:scaleX(0.995);">Calibri Light (Headings)</span>
<span class="t" style="left:239.1px;top:336.00px;font-size:11.5px;color:#fff;transform:scaleX(0.973);">Calibri (Body)</span>
<span class="t" style="left:239.1px;top:349.00px;font-size:11.5px;color:#000;transform:scaleX(0.935);">Agency FB</span>
<span class="t" style="left:239.1px;top:362.00px;font-size:11.5px;color:#000;transform:scaleX(1.019);">Aharoni</span>
<span class="t" style="left:239.1px;top:375.00px;font-size:11.5px;color:#000;transform:scaleX(1.029);">Aldhabi</span>
<span class="t" style="left:239.1px;top:388.00px;font-size:11.5px;color:#000;transform:scaleX(1.007);">Algerian</span>
<span class="t" style="left:491.2px;top:323.00px;font-size:11.5px;color:#fff;transform:scaleX(0.991);">Regular</span>
<span class="t" style="left:491.2px;top:336.00px;font-size:11.5px;color:#000;transform:scaleX(1.010);">Italic</span>
<span class="t" style="left:491.2px;top:349.00px;font-size:11.5px;color:#000;transform:scaleX(1.012);">Bold</span>
<span class="t" style="left:491.2px;top:362.00px;font-size:11.5px;color:#000;transform:scaleX(1.017);">Bold Italic</span>
<span class="t" style="left:620.9px;top:323.00px;font-size:11.5px;color:#000;transform:scaleX(0.999);">8</span>
<span class="t" style="left:620.9px;top:336.00px;font-size:11.5px;color:#000;transform:scaleX(0.999);">9</span>
<span class="t" style="left:620.9px;top:349.00px;font-size:11.5px;color:#000;transform:scaleX(0.969);">10</span>
<span class="t" style="left:620.9px;top:362.00px;font-size:11.5px;color:#fff;transform:scaleX(0.954);">11</span>
<span class="t" style="left:620.9px;top:375.00px;font-size:11.5px;color:#000;transform:scaleX(0.969);">12</span>
<span class="t" style="left:620.9px;top:388.00px;font-size:11.5px;color:#000;transform:scaleX(0.992);">14</span>
<span class="t" style="left:219.1px;top:406.00px;font-size:11.5px;color:#000;transform:scaleX(1.019);"><u>U</u>nderline:</span>
<span class="t" style="left:487.1px;top:406.00px;font-size:11.5px;color:#000;transform:scaleX(0.994);"><u>C</u>olor:</span>
<span class="t" style="left:223.2px;top:426.00px;font-size:11.5px;color:#000;transform:scaleX(1.000);">None</span>
<span class="t" style="left:634.1px;top:426.00px;font-size:11.5px;color:#000;transform:scaleX(1.040);"><u>N</u>ormal font</span>
<span class="t" style="left:224.8px;top:447.00px;font-size:11.5px;color:#000;transform:scaleX(0.964);">Effects</span>
<span class="t" style="left:493.1px;top:447.00px;font-size:11.5px;color:#000;transform:scaleX(0.953);">Preview</span>
<span class="t" style="left:245.2px;top:468.00px;font-size:11.5px;color:#000;transform:scaleX(1.044);">Stri<u>k</u>ethrough</span>
<span class="t" style="left:245.2px;top:487.00px;font-size:11.5px;color:#000;transform:scaleX(0.988);">Sup<u>e</u>rscript</span>
<span class="t" style="left:245.2px;top:506.00px;font-size:11.5px;color:#000;transform:scaleX(0.997);">Su<u>b</u>script</span>
<span class="t" style="left:218.8px;top:558.00px;font-size:11.5px;color:#000;transform:scaleX(1.004);">This is a TrueType font.  The same font will be used on both your printer and your screen.</span>
<span class="t" style="left:591.0px;top:654.00px;font-size:11.5px;color:#000;transform:scaleX(0.920);">OK</span>
<span class="t" style="left:666.1px;top:654.00px;font-size:11.5px;color:#000;transform:scaleX(0.944);">Cancel</span>
</body></html>
